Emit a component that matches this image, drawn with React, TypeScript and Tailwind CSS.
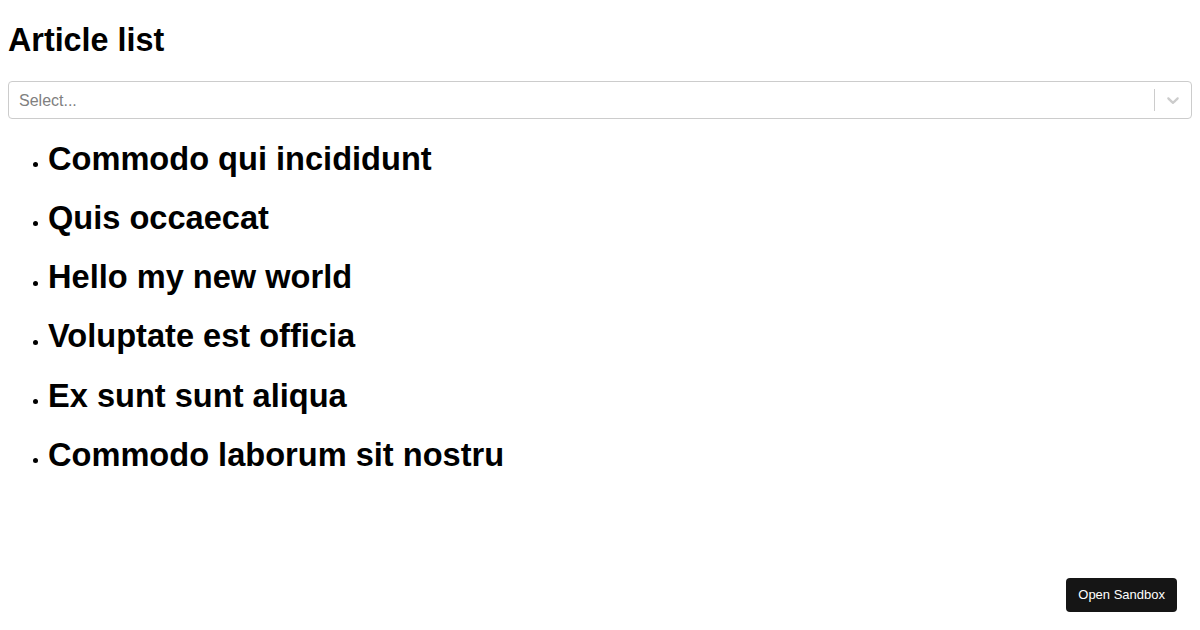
const articles = [
  'Commodo qui incididunt',
  'Quis occaecat',
  'Hello my new world',
  'Voluptate est officia',
  'Ex sunt sunt aliqua',
  'Commodo laborum sit nostru',
];

export default function App() {
  return (
    <div className="min-h-[630px] bg-white px-2 pt-[22px] text-black font-['Liberation_Sans',Arial,sans-serif]">
      <h1 className="text-[32.3px] font-bold leading-[37px]">Article list</h1>

      <div className="mt-[22px] flex h-[38px] items-center rounded border border-[#cccccc] bg-white">
        <div className="flex-1 px-[10px] pt-[2px] text-base text-[#808080]">Select...</div>
        <span className="h-[22px] w-px bg-[#cccccc]" />
        <div className="flex w-[36px] items-center justify-center text-[#cccccc]">
          <svg width="20" height="20" viewBox="0 0 20 20" fill="currentColor">
            <path d="M4.516 7.548c0.436-0.446 1.043-0.481 1.576 0l3.908 3.747 3.908-3.747c0.533-0.481 1.141-0.446 1.574 0 0.436 0.445 0.408 1.197 0 1.615-0.406 0.418-4.695 4.502-4.695 4.502-0.217 0.223-0.502 0.335-0.787 0.335s-0.57-0.112-0.789-0.335c0 0-4.287-4.084-4.695-4.502s-0.436-1.17 0-1.615z" />
          </svg>
        </div>
      </div>

      <ul className="mt-[20.5px] flex flex-col gap-[22.3px]">
        {articles.map((title) => (
          <li key={title} className="flex items-center">
            <span className="ml-[25px] mr-[10px] mt-[13px] h-[5px] w-[5px] rounded-full bg-black" />
            <h2 className="text-[32.6px] font-bold leading-[37px]">{title}</h2>
          </li>
        ))}
      </ul>

      <button className="fixed bottom-[18px] right-[23px] h-[34px] rounded bg-[#151515] px-3 text-[13px] text-white">
        Open Sandbox
      </button>
    </div>
  );
}
